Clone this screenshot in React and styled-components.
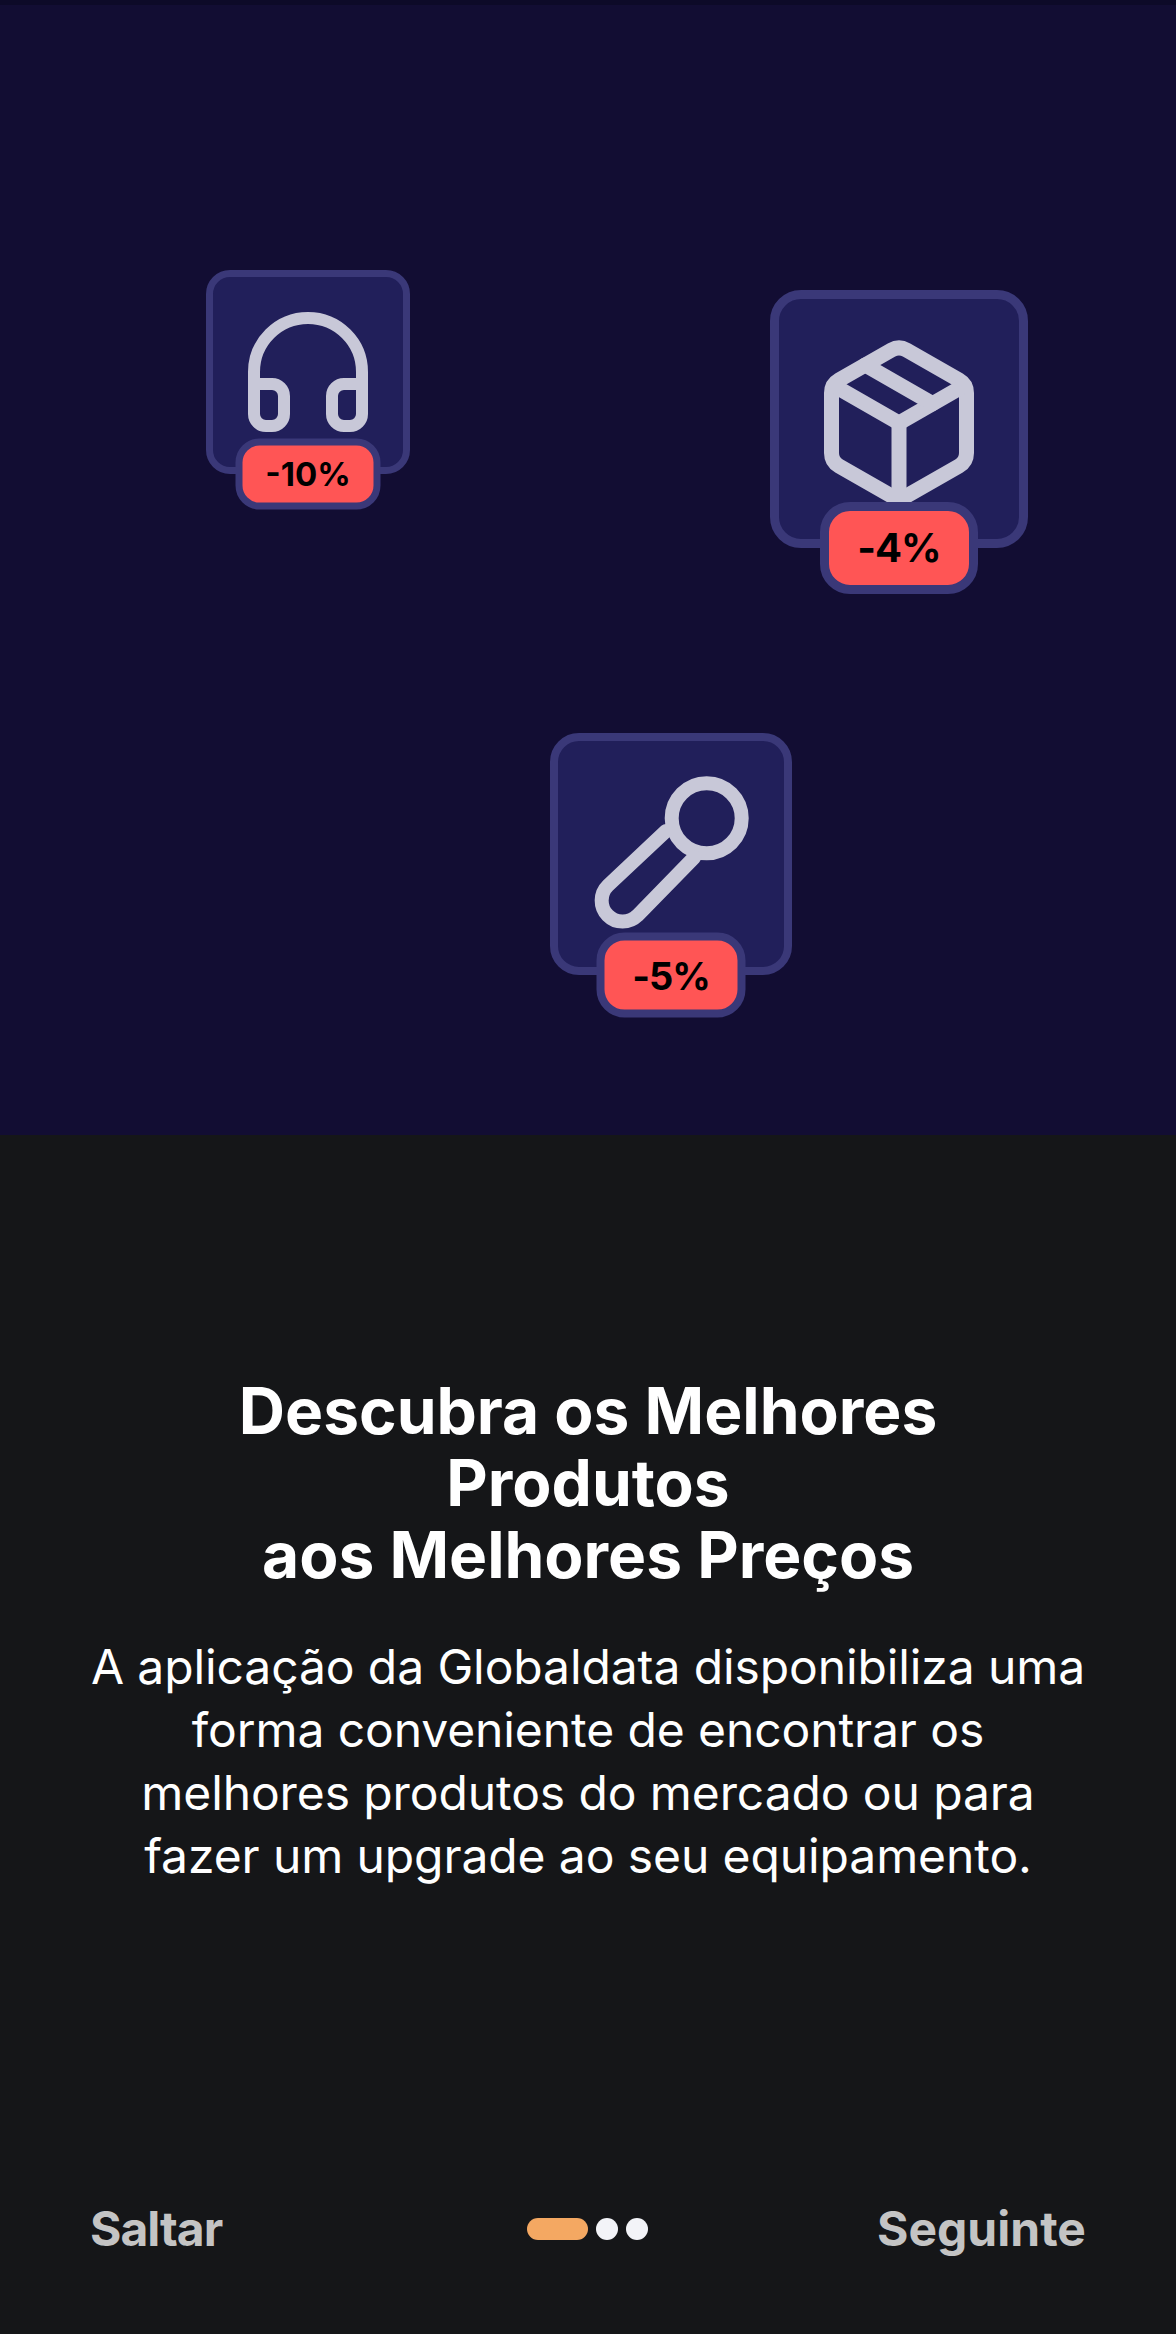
import React from "react";
import styled, { createGlobalStyle } from "styled-components";

const Global = createGlobalStyle`
  html, body { margin: 0; padding: 0; background: #151618; }
  * { box-sizing: border-box; }
`;

const Page = styled.div`
  width: 1176px;
  height: 2334px;
  display: flex;
  flex-direction: column;
  background: #151618;
  font-family: "Inter", "Noto Sans", sans-serif;
`;

const Hero = styled.section`
  position: relative;
  height: 1135px;
  flex: none;
  background: #120d33;
  border-top: 5px solid #0d0a28;
`;

const Card = styled.div`
  position: absolute;
  left: ${(p) => p.$x}px;
  top: ${(p) => p.$y - 5}px;
  width: ${(p) => p.$size}px;
  height: ${(p) => p.$size}px;
  display: flex;
  align-items: center;
  justify-content: center;
  background: #211f5a;
  border: ${(p) => p.$border}px solid #3a3878;
  border-radius: ${(p) => p.$radius}px;
`;

const Badge = styled.div`
  position: absolute;
  left: 50%;
  bottom: ${(p) => -p.$border}px;
  transform: translate(-50%, 50%);
  width: ${(p) => p.$w}px;
  height: ${(p) => p.$h}px;
  display: flex;
  align-items: center;
  justify-content: center;
  background: #ff5555;
  border: ${(p) => p.$border}px solid #3a3878;
  border-radius: ${(p) => p.$radius}px;
  color: #000;
  font-weight: 700;
  font-size: ${(p) => p.$font}px;
  letter-spacing: ${(p) => p.$spacing}px;
  line-height: 1;
`;

const Icon = styled.svg`
  flex: none;
  margin-top: ${(p) => p.$drop || 0}px;
  fill: none;
  stroke: #c8c8d8;
  stroke-linecap: round;
  stroke-linejoin: round;
`;

const Content = styled.section`
  flex: 1;
  display: flex;
  flex-direction: column;
  align-items: center;
  padding-top: 240px;
  text-align: center;
`;

const Title = styled.h1`
  margin: 0 0 44px;
  color: #fff;
  font-size: 64px;
  line-height: 72px;
  font-weight: 700;
`;

const Text = styled.p`
  margin: 0;
  color: #fff;
  font-size: 48px;
  line-height: 63px;
  font-weight: 400;
  letter-spacing: -0.1px;
`;

const Footer = styled.footer`
  flex: none;
  height: 105px;
  padding: 0 91px 0 90px;
  margin-bottom: 53px;
  display: flex;
  align-items: center;
  justify-content: space-between;
`;

const Action = styled.span`
  width: 208px;
  color: #c4c4c4;
  font-size: 48px;
  font-weight: 700;
  letter-spacing: ${(p) => p.$spacing || 0}px;
  text-align: ${(p) => p.$align};
`;

const Dots = styled.div`
  display: flex;
  align-items: center;
  gap: 8px;
`;

const Dot = styled.span`
  width: ${(p) => (p.$active ? 61 : 22)}px;
  height: 22px;
  border-radius: 11px;
  background: ${(p) => (p.$active ? "#f4a862" : "#f3f4f8")};
`;

const Headphones = () => (
  <Icon viewBox="0 0 24 24" width="144" height="144" strokeWidth="2">
    <path d="M3 14h3a2 2 0 0 1 2 2v3a2 2 0 0 1-2 2H5a2 2 0 0 1-2-2v-7a9 9 0 0 1 18 0v7a2 2 0 0 1-2 2h-1a2 2 0 0 1-2-2v-3a2 2 0 0 1 2-2h3" />
  </Icon>
);

const Package = () => (
  <Icon viewBox="0 0 24 24" width="180" height="180" strokeWidth="2" $drop={8}>
    <path d="M11 21.73a2 2 0 0 0 2 0l7-4A2 2 0 0 0 21 16V8a2 2 0 0 0-1-1.73l-7-4a2 2 0 0 0-2 0l-7 4A2 2 0 0 0 3 8v8a2 2 0 0 0 1 1.73z" />
    <path d="M12 22V12" />
    <path d="M3.29 7 12 12l8.71-5" />
    <path d="m7.5 4.27 9 5.15" />
  </Icon>
);

const Mic = () => (
  <Icon viewBox="0 0 24 24" width="168" height="168" strokeWidth="2">
    <circle cx="17.1" cy="6.9" r="5" />
    <path d="M11.3 8.7 3 16.5a3 3 0 0 0 4.2 4.3l8.1-8.3" />
  </Icon>
);

const items = [
  { x: 206, y: 270, size: 204, border: 7, radius: 24, w: 145, h: 71, br: 24, font: 33, spacing: 0, label: "-10%", icon: <Headphones /> },
  { x: 770, y: 290, size: 258, border: 9, radius: 31, w: 158, h: 92, br: 30, font: 40, spacing: -1, label: "-4%", icon: <Package /> },
  { x: 550, y: 733, size: 242, border: 8, radius: 29, w: 149, h: 85, br: 28, font: 38, spacing: -1, label: "-5%", icon: <Mic /> },
];

export default function App() {
  return (
    <Page>
      <Global />
      <Hero>
        {items.map((it) => (
          <Card key={it.label} $x={it.x} $y={it.y} $size={it.size} $border={it.border} $radius={it.radius}>
            {it.icon}
            <Badge $w={it.w} $h={it.h} $border={it.border} $radius={it.br} $font={it.font} $spacing={it.spacing}>
              {it.label}
            </Badge>
          </Card>
        ))}
      </Hero>
      <Content>
        <Title>
          Descubra os Melhores
          <br />
          Produtos
          <br />
          aos Melhores Preços
        </Title>
        <Text>
          A aplicação da Globaldata disponibiliza uma
          <br />
          forma conveniente de encontrar os
          <br />
          melhores produtos do mercado ou para
          <br />
          fazer um upgrade ao seu equipamento.
        </Text>
      </Content>
      <Footer>
        <Action $align="left" $spacing={-1}>Saltar</Action>
        <Dots>
          <Dot $active />
          <Dot />
          <Dot />
        </Dots>
        <Action $align="right">Seguinte</Action>
      </Footer>
    </Page>
  );
}
